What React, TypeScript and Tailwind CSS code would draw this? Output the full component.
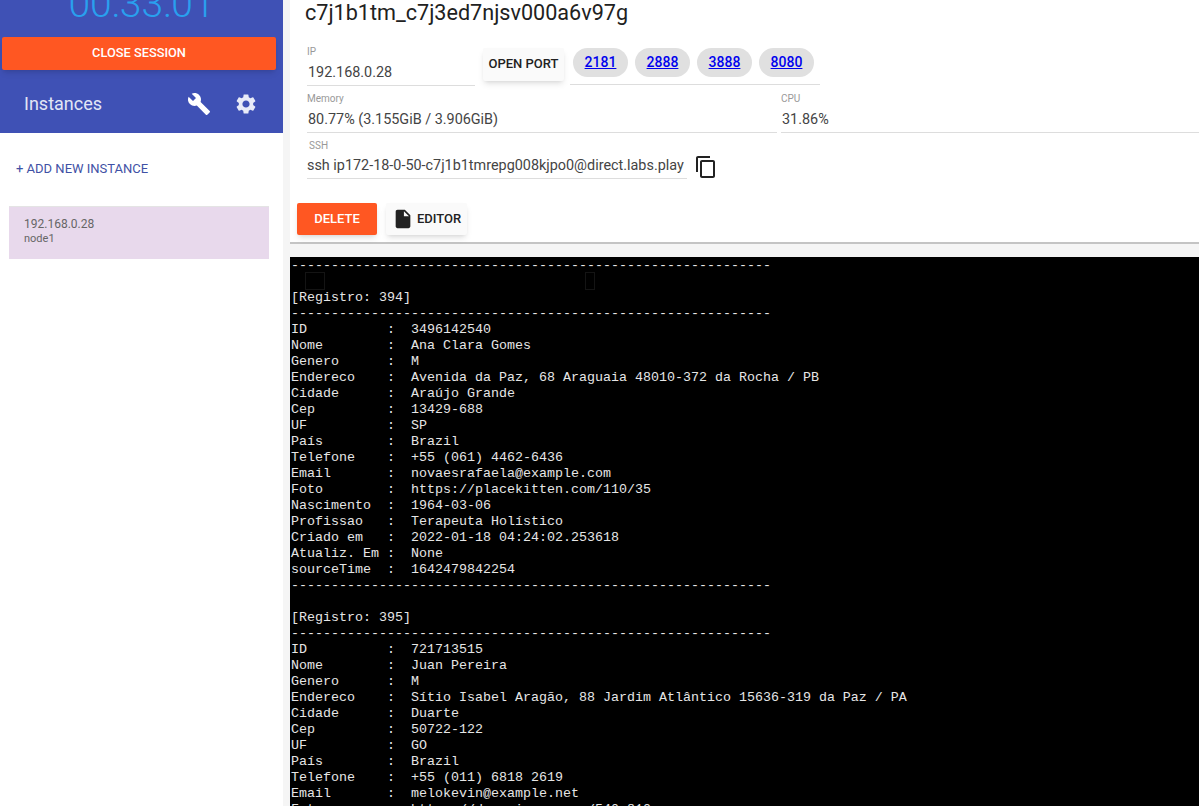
import { MdBuild, MdContentCopy, MdInsertDriveFile, MdSettings } from "react-icons/md";

const dashes = "-".repeat(60);

const terminal = `${dashes}

[Registro: 394]
${dashes}
ID          :  3496142540
Nome        :  Ana Clara Gomes
Genero      :  M
Endereco    :  Avenida da Paz, 68 Araguaia 48010-372 da Rocha / PB
Cidade      :  Araújo Grande
Cep         :  13429-688
UF          :  SP
País        :  Brazil
Telefone    :  +55 (061) 4462-6436
Email       :  novaesrafaela@example.com
Foto        :  https://placekitten.com/110/35
Nascimento  :  1964-03-06
Profissao   :  Terapeuta Holístico
Criado em   :  2022-01-18 04:24:02.253618
Atualiz. Em :  None
sourceTime  :  1642479842254
${dashes}

[Registro: 395]
${dashes}
ID          :  721713515
Nome        :  Juan Pereira
Genero      :  M
Endereco    :  Sítio Isabel Aragão, 88 Jardim Atlântico 15636-319 da Paz / PA
Cidade      :  Duarte
Cep         :  50722-122
UF          :  GO
País        :  Brazil
Telefone    :  +55 (011) 6818 2619
Email       :  melokevin@example.net
Foto        :  https://dummyimage.com/540x810`;

const ports = ["2181", "2888", "3888", "8080"];

export default function App() {
    return (
        <div className="flex h-[806px] w-[1199px] overflow-hidden bg-[#f5f5f5] font-['Roboto',sans-serif]">
            <aside className="flex w-[283px] shrink-0 flex-col bg-white">
                <div className="h-[133px] overflow-hidden bg-[#3f51b5]">
                    <div className="mt-[-22px] h-[53px] text-center text-[39px] font-light leading-[53px] text-[#29a0ee]">
                        00:33:01
                    </div>
                    <div className="mx-[2px] mt-[6px] flex h-[33px] w-[274px] items-center justify-center rounded-[2px] bg-[#ff5722] pb-[2px] text-[12.8px] font-medium text-white shadow-md">
                        CLOSE SESSION
                    </div>
                    <div className="mt-[21px] flex h-[26px] items-center pl-6 text-white">
                        <span className="mb-[2px] text-[18px] text-[#e3e6f5]">Instances</span>
                        <MdBuild className="ml-[85px] h-6 w-6" />
                        <MdSettings className="ml-[23px] h-6 w-6 text-[#e8ebf8]" />
                    </div>
                </div>
                <div className="mt-[27px] pl-4 text-[13px] font-normal leading-[18px] text-[#3f51a5]">
                    + ADD NEW INSTANCE
                </div>
                <div className="ml-[9px] mt-[28px] h-[53px] w-[260px] border-t border-[#e4e4e4] bg-[#e8d9ec] pl-[15px] pt-[10px] text-[#666]">
                    <div className="text-[12px] leading-[14px]">192.168.0.28</div>
                    <div className="text-[11px] leading-[15px]">node1</div>
                </div>
            </aside>

            <main className="ml-[7px] flex min-w-0 flex-1 flex-col">
                <section className="h-[244px] shrink-0 border-b-2 border-[#c4c4c4] bg-white pl-[15px]">
                    <h1 className="h-[37px] text-[21.6px] leading-[26px] text-[#212121]">c7j1b1tm_c7j3ed7njsv000a6v97g</h1>

                    <div className="flex h-[48px]">
                        <div className="ml-[2px] mt-[9px] h-[40px] w-[168px] border-b border-[#ddd]">
                            <div className="text-[10px] leading-[12px] text-[#999]">IP</div>
                            <div className="mt-[6px] pl-[1px] text-[14.4px] leading-[18px] text-[#444]">192.168.0.28</div>
                        </div>
                        <div className="ml-[8px] mt-[11px] flex h-[33px] w-[81px] items-center justify-center rounded-[2px] bg-[#fafafa] pb-[2px] text-[13px] font-medium text-[#222] shadow-md">
                            OPEN PORT
                        </div>
                        <div className="ml-[6px] mt-[11px] flex h-[37px] w-[250px] gap-[7px] border-b border-[#ddd] pl-[3px]">
                            {ports.map((port) => (
                                <a
                                    key={port}
                                    href="#"
                                    className="flex h-[29px] w-[55px] items-center justify-center rounded-full bg-[#e0e0e0] text-[14px] font-medium text-[#0000ee] underline"
                                >
                                    {port}
                                </a>
                            ))}
                        </div>
                    </div>

                    <div className="flex h-[48px]">
                        <div className="ml-[2px] mt-[8px] h-[40px] w-[470px] border-b border-[#ddd]">
                            <div className="text-[10px] leading-[12px] text-[#999]">Memory</div>
                            <div className="mt-[6px] pl-[1px] text-[14.4px] leading-[18px] text-[#444]">80.77% (3.155GiB / 3.906GiB)</div>
                        </div>
                        <div className="ml-[4px] mt-[8px] h-[40px] flex-1 border-b border-[#ddd]">
                            <div className="text-[10px] leading-[12px] text-[#999]">CPU</div>
                            <div className="mt-[6px] pl-[1px] text-[14.4px] leading-[18px] text-[#444]">31.86%</div>
                        </div>
                    </div>

                    <div className="flex">
                        <div className="ml-[2px] mt-[7px] h-[39px] w-[380px] overflow-hidden border-b border-[#ddd]">
                            <div className="pl-[2px] text-[10px] leading-[12px] text-[#999]">SSH</div>
                            <div className="mt-[5px] whitespace-nowrap text-[14.4px] leading-[18px] text-[#444]">
                                ssh ip172-18-0-50-c7j1b1tmrepg008kjpo0@direct.labs.play
                            </div>
                        </div>
                        <MdContentCopy className="ml-[7px] mt-[22px] h-6 w-6 text-[#222]" />
                    </div>

                    <div className="mt-[24px] flex">
                        <div className="ml-[-8px] flex h-[32px] w-[80px] items-center justify-center rounded-[2px] bg-[#ff5722] text-[13px] font-medium text-white shadow-md">
                            DELETE
                        </div>
                        <div className="ml-[9px] flex h-[32px] w-[81px] items-center justify-center gap-[3px] rounded-[2px] bg-[#fafafa] text-[13px] font-medium text-[#222] shadow-md">
                            <MdInsertDriveFile className="h-[22px] w-[22px]" />
                            EDITOR
                        </div>
                    </div>
                </section>

                <div className="relative mt-[13px] min-h-0 flex-1 overflow-hidden bg-black">
                    <pre className="pl-px pt-px font-['Liberation_Mono',monospace] text-[13.33px] leading-[16px] text-[#e6e6e6]">
                        {terminal}
                    </pre>
                    {/* faint leftovers of the terminal cursor */}
                    <span className="absolute left-[15px] top-[15px] h-[18px] w-[20px] border border-[#141414]" />
                    <span className="absolute left-[295px] top-[15px] h-[18px] w-[10px] border border-[#141414]" />
                </div>
            </main>
        </div>
    );
}
